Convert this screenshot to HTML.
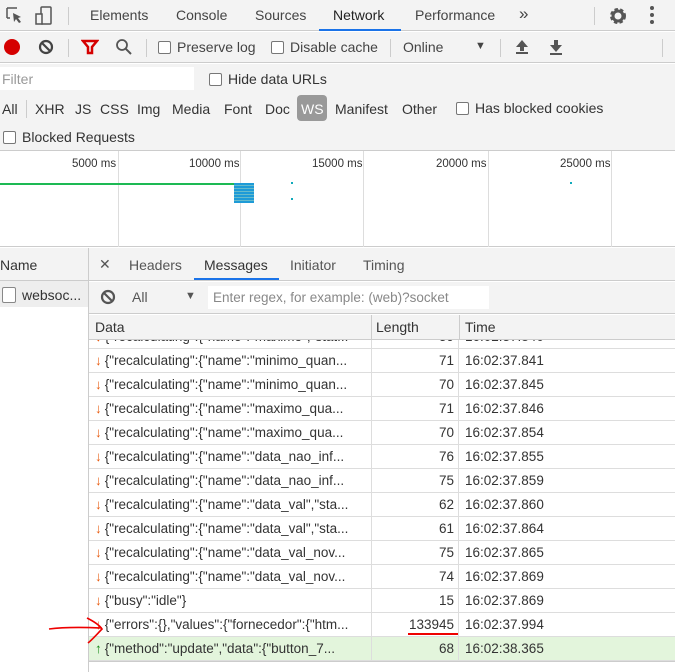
<!DOCTYPE html>
<html><head><meta charset="utf-8"><style>
*{box-sizing:border-box;margin:0;padding:0}
body{width:675px;height:672px;overflow:hidden;background:#fff;font-family:"Liberation Sans",sans-serif;font-size:14px;color:#333;position:relative}
.a{position:absolute;white-space:nowrap}
.bar{position:absolute;left:0;width:675px;background:#f3f3f3}
.cb{display:inline-block;width:13px;height:13px;border:1px solid #777;border-radius:2px;background:#fff;vertical-align:-2px;margin-right:6px}
.row{position:absolute;left:89px;width:586px;height:24px;border-bottom:1px solid #ddd;font-size:13.5px;line-height:23px}
.row .d{position:absolute;left:6px;width:276px;overflow:hidden}
.row .l{position:absolute;left:282px;width:88px;text-align:right;padding-right:4px;border-left:1px solid #ddd;border-right:1px solid #ddd;height:24px}
.row .t{position:absolute;left:376px}
.ar{color:#e8590c;font-weight:bold;margin-right:3px}
</style></head><body>
<!-- top tabs -->
<div class="bar" style="top:0;height:31px;border-bottom:1px solid #ccc"></div>
<svg class="a" style="left:5px;top:6px" width="20" height="20"><path d="M2 2h10M2 2v10M2 12h3" stroke="#555" fill="none" stroke-width="1.5"/><path d="M8 7l8 4-3 1 3 4-2 1-3-4-2 3z" fill="#555"/></svg>
<svg class="a" style="left:34px;top:5px" width="20" height="22"><rect x="7" y="2" width="10" height="17" rx="1" stroke="#555" fill="none" stroke-width="1.5"/><rect x="2" y="9" width="6" height="10" stroke="#555" fill="#f3f3f3" stroke-width="1.5"/></svg>
<div class="a" style="left:68px;top:7px;width:1px;height:18px;background:#ccc"></div>
<div class="a" style="left:90px;top:7px;color:#444">Elements</div>
<div class="a" style="left:176px;top:7px;color:#444">Console</div>
<div class="a" style="left:255px;top:7px;color:#444">Sources</div>
<div class="a" style="left:333px;top:7px;color:#222">Network</div>
<div class="a" style="left:319px;top:29px;width:82px;height:2px;background:#1a73e8"></div>
<div class="a" style="left:415px;top:7px;color:#444">Performance</div>
<div class="a" style="left:519px;top:4px;font-size:17px;color:#444">»</div>
<div class="a" style="left:594px;top:7px;width:1px;height:18px;background:#ccc"></div>
<svg class="a" style="left:608px;top:6px" width="20" height="20" viewBox="0 0 20 20"><circle cx="10" cy="10" r="6" fill="none" stroke="#555" stroke-width="4" stroke-dasharray="3 2"/><circle cx="10" cy="10" r="5" fill="none" stroke="#555" stroke-width="3"/></svg>
<div class="a" style="left:650px;top:6px;width:4px;height:4px;background:#555;border-radius:2px;box-shadow:0 7px #555,0 14px #555"></div>
<!-- toolbar -->
<div class="bar" style="top:32px;height:31px;border-bottom:1px solid #ccc"></div>
<div class="a" style="left:4px;top:39px;width:16px;height:16px;border-radius:8px;background:#d50000"></div>
<svg class="a" style="left:38px;top:39px" width="16" height="16"><circle cx="8" cy="8" r="6" fill="none" stroke="#444" stroke-width="2.2"/><path d="M4 4l8 8" stroke="#444" stroke-width="2.2"/></svg>
<div class="a" style="left:68px;top:39px;width:1px;height:18px;background:#ccc"></div>
<svg class="a" style="left:81px;top:39px" width="18" height="16"><path d="M2 2h14l-5 6v6h-4v-6z" fill="none" stroke="#d50000" stroke-width="2.5"/></svg>
<svg class="a" style="left:115px;top:38px" width="18" height="18"><circle cx="7" cy="7" r="5" fill="none" stroke="#555" stroke-width="1.8"/><path d="M11 11l5 5" stroke="#555" stroke-width="2"/></svg>
<div class="a" style="left:146px;top:39px;width:1px;height:18px;background:#ccc"></div>
<div class="a" style="left:158px;top:39px;color:#444"><span class="cb"></span>Preserve log</div>
<div class="a" style="left:271px;top:39px;color:#444"><span class="cb"></span>Disable cache</div>
<div class="a" style="left:390px;top:39px;width:1px;height:18px;background:#ccc"></div>
<div class="a" style="left:403px;top:39px;color:#444">Online</div>
<div class="a" style="left:475px;top:40px;font-size:11px;color:#444">▼</div>
<div class="a" style="left:500px;top:39px;width:1px;height:18px;background:#ccc"></div>
<svg class="a" style="left:515px;top:39px" width="14" height="16"><path d="M7 1l6 7h-4v4h-4v-4h-4z" fill="#555"/><rect x="1" y="13" width="12" height="2" fill="#555"/></svg>
<svg class="a" style="left:549px;top:39px" width="14" height="16"><path d="M7 13l6-7h-4v-5h-4v5h-4z" fill="#555"/><rect x="1" y="14" width="12" height="2" fill="#555"/></svg>
<div class="a" style="left:662px;top:39px;width:1px;height:18px;background:#ccc"></div>
<!-- filter rows -->
<div class="bar" style="top:64px;height:87px;border-bottom:1px solid #ccc"></div>
<div class="a" style="left:0;top:67px;width:194px;height:23px;background:#fff"></div>
<div class="a" style="left:2px;top:71px;color:#999">Filter</div>
<div class="a" style="left:209px;top:71px;color:#333"><span class="cb"></span>Hide data URLs</div>
<div class="a" style="left:2px;top:101px">All</div>
<div class="a" style="left:26px;top:100px;width:1px;height:18px;background:#ccc"></div>
<div class="a" style="left:35px;top:101px">XHR</div>
<div class="a" style="left:75px;top:101px">JS</div>
<div class="a" style="left:100px;top:101px">CSS</div>
<div class="a" style="left:137px;top:101px">Img</div>
<div class="a" style="left:172px;top:101px">Media</div>
<div class="a" style="left:224px;top:101px">Font</div>
<div class="a" style="left:265px;top:101px">Doc</div>
<div class="a" style="left:297px;top:95px;width:30px;height:26px;border-radius:4px;background:#999"></div>
<div class="a" style="left:301px;top:101px;color:#fff">WS</div>
<div class="a" style="left:335px;top:101px">Manifest</div>
<div class="a" style="left:402px;top:101px">Other</div>
<div class="a" style="left:456px;top:100px"><span class="cb"></span>Has blocked cookies</div>
<div class="a" style="left:3px;top:129px"><span class="cb"></span>Blocked Requests</div>
<!-- timeline -->
<div class="a" style="left:0;top:151px;width:675px;height:96px;border-bottom:1px solid #ccc"></div>
<div class="a" style="left:118px;top:151px;width:1px;height:96px;background:#ddd"></div>
<div class="a" style="left:240px;top:151px;width:1px;height:96px;background:#ddd"></div>
<div class="a" style="left:363px;top:151px;width:1px;height:96px;background:#ddd"></div>
<div class="a" style="left:488px;top:151px;width:1px;height:96px;background:#ddd"></div>
<div class="a" style="left:611px;top:151px;width:1px;height:96px;background:#ddd"></div>
<div class="a" style="left:72px;top:158px;font-size:11.5px">5000 ms</div>
<div class="a" style="left:189px;top:158px;font-size:11.5px">10000 ms</div>
<div class="a" style="left:312px;top:158px;font-size:11.5px">15000 ms</div>
<div class="a" style="left:436px;top:158px;font-size:11.5px">20000 ms</div>
<div class="a" style="left:560px;top:158px;font-size:11.5px">25000 ms</div>
<div class="a" style="left:0;top:183px;width:240px;height:2px;background:#1db954"></div>
<div class="a" style="left:234px;top:183px;width:20px;height:20px;background:repeating-linear-gradient(#1e9bd7 0 2px,#6bc 2px 3px)"></div>
<div class="a" style="left:291px;top:182px;width:2px;height:2px;background:#1ab"></div>
<div class="a" style="left:291px;top:198px;width:2px;height:2px;background:#1ab"></div>
<div class="a" style="left:570px;top:182px;width:2px;height:2px;background:#1ab"></div>
<!-- name panel -->
<div class="a" style="left:0;top:248px;width:88px;height:33px;background:#f3f3f3;border-bottom:1px solid #ccc"></div>
<div class="a" style="left:0;top:257px">Name</div>
<div class="a" style="left:0;top:281px;width:88px;height:26px;background:#eee"></div>
<div class="a" style="left:2px;top:287px;width:14px;height:16px;border:1px solid #888;border-radius:2px;background:#fff"></div>
<div class="a" style="left:22px;top:287px">websoc...</div>
<div class="a" style="left:88px;top:248px;width:1px;height:424px;background:#ccc"></div>
<!-- detail -->
<div class="a" style="left:89px;top:248px;width:586px;height:33px;background:#f3f3f3;border-bottom:1px solid #ccc"></div>
<div class="a" style="left:99px;top:256px;color:#555">✕</div>
<div class="a" style="left:129px;top:257px;color:#555">Headers</div>
<div class="a" style="left:204px;top:257px;color:#333">Messages</div>
<div class="a" style="left:194px;top:278px;width:85px;height:2px;background:#1a73e8"></div>
<div class="a" style="left:290px;top:257px;color:#555">Initiator</div>
<div class="a" style="left:363px;top:257px;color:#555">Timing</div>
<div class="a" style="left:89px;top:282px;width:586px;height:32px;background:#f3f3f3;border-bottom:1px solid #ccc"></div>
<svg class="a" style="left:100px;top:289px" width="16" height="16"><circle cx="8" cy="8" r="6" fill="none" stroke="#555" stroke-width="2.2"/><path d="M4 4l8 8" stroke="#555" stroke-width="2.2"/></svg>
<div class="a" style="left:132px;top:289px;color:#555">All</div>
<div class="a" style="left:185px;top:290px;font-size:11px;color:#555">▼</div>
<div class="a" style="left:208px;top:286px;width:281px;height:23px;background:#fff"></div>
<div class="a" style="left:213px;top:290px;color:#888;font-size:13.5px">Enter regex, for example: (web)?socket</div>
<div class="a" style="left:89px;top:340px;width:586px;height:9px;overflow:hidden">
<div class="row" style="top:-15px;left:0"><span class="d"><span class="ar">↓</span>{"recalculating":{"name":"maximo","stat...</span><span class="l">59</span><span class="t">16:02:37.840</span></div>
</div>
<div class="a" style="left:89px;top:315px;width:586px;height:25px;background:#f3f3f3;border-bottom:1px solid #ccc"></div>
<div class="a" style="left:95px;top:319px">Data</div>
<div class="a" style="left:371px;top:315px;width:1px;height:25px;background:#ccc"></div>
<div class="a" style="left:376px;top:319px">Length</div>
<div class="a" style="left:459px;top:315px;width:1px;height:25px;background:#ccc"></div>
<div class="a" style="left:465px;top:319px">Time</div>
<div class="row" style="top:349px"><span class="d"><span class="ar">↓</span>{"recalculating":{"name":"minimo_quan...</span><span class="l">71</span><span class="t">16:02:37.841</span></div>
<div class="row" style="top:373px"><span class="d"><span class="ar">↓</span>{"recalculating":{"name":"minimo_quan...</span><span class="l">70</span><span class="t">16:02:37.845</span></div>
<div class="row" style="top:397px"><span class="d"><span class="ar">↓</span>{"recalculating":{"name":"maximo_qua...</span><span class="l">71</span><span class="t">16:02:37.846</span></div>
<div class="row" style="top:421px"><span class="d"><span class="ar">↓</span>{"recalculating":{"name":"maximo_qua...</span><span class="l">70</span><span class="t">16:02:37.854</span></div>
<div class="row" style="top:445px"><span class="d"><span class="ar">↓</span>{"recalculating":{"name":"data_nao_inf...</span><span class="l">76</span><span class="t">16:02:37.855</span></div>
<div class="row" style="top:469px"><span class="d"><span class="ar">↓</span>{"recalculating":{"name":"data_nao_inf...</span><span class="l">75</span><span class="t">16:02:37.859</span></div>
<div class="row" style="top:493px"><span class="d"><span class="ar">↓</span>{"recalculating":{"name":"data_val","sta...</span><span class="l">62</span><span class="t">16:02:37.860</span></div>
<div class="row" style="top:517px"><span class="d"><span class="ar">↓</span>{"recalculating":{"name":"data_val","sta...</span><span class="l">61</span><span class="t">16:02:37.864</span></div>
<div class="row" style="top:541px"><span class="d"><span class="ar">↓</span>{"recalculating":{"name":"data_val_nov...</span><span class="l">75</span><span class="t">16:02:37.865</span></div>
<div class="row" style="top:565px"><span class="d"><span class="ar">↓</span>{"recalculating":{"name":"data_val_nov...</span><span class="l">74</span><span class="t">16:02:37.869</span></div>
<div class="row" style="top:589px"><span class="d"><span class="ar">↓</span>{"busy":"idle"}</span><span class="l">15</span><span class="t">16:02:37.869</span></div>
<div class="row" style="top:613px"><span class="d"><span class="ar">↓</span>{"errors":{},"values":{"fornecedor":{"htm...</span><span class="l">133945</span><span class="t">16:02:37.994</span></div>
<div class="row" style="top:637px;background:#e3f5dc"><span class="d"><span class="ar" style="color:#1a8a1a">↑</span>{"method":"update","data":{"button_7...</span><span class="l">68</span><span class="t">16:02:38.365</span></div>
<div class="a" style="left:89px;top:661px;width:586px;height:1px;background:#ccc"></div>
<div class="a" style="left:408px;top:633px;width:50px;height:2px;background:#e00"></div>
<svg class="a" style="left:45px;top:614px" width="60" height="32"><path d="M4 15c15-2 30-2 53 -1M42 4c8 4 13 8 15 11-4 4-9 10-14 14" stroke="#e00" stroke-width="1.6" fill="none"/></svg>
</body></html>
